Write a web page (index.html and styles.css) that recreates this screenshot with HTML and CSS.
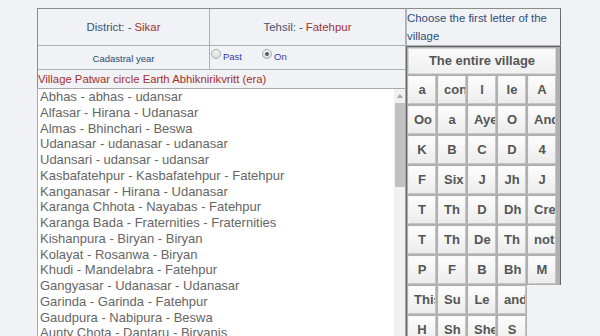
FILE: index.html
```html
<!DOCTYPE html>
<html>
<head>
<meta charset="utf-8">
<title>Village selection</title>
<link rel="stylesheet" href="styles.css">
</head>
<body>
<div class="frame">
  <div class="left">
    <div class="row top">
      <div class="cell">District: - <span class="val">Sikar</span></div>
      <div class="cell">Tehsil: - <span class="val">Fatehpur</span></div>
    </div>
    <div class="row year">
      <div class="cell ylabel">Cadastral year</div>
      <div class="cell radios">
        <span class="radio"></span><span class="rtext">Past</span>
        <span class="radio on"></span><span class="rtext">On</span>
      </div>
    </div>
    <div class="caption">Village Patwar circle Earth Abhiknirikvritt (era)</div>
    <div class="listbox">
      <div class="items">
        <div>Abhas - abhas - udansar</div>
        <div>Alfasar - Hirana - Udanasar</div>
        <div>Almas - Bhinchari - Beswa</div>
        <div>Udanasar - udanasar - udanasar</div>
        <div>Udansari - udansar - udansar</div>
        <div>Kasbafatehpur - Kasbafatehpur - Fatehpur</div>
        <div>Kanganasar - Hirana - Udanasar</div>
        <div>Karanga Chhota - Nayabas - Fatehpur</div>
        <div>Karanga Bada - Fraternities - Fraternities</div>
        <div>Kishanpura - Biryan - Biryan</div>
        <div>Kolayat - Rosanwa - Biryan</div>
        <div>Khudi - Mandelabra - Fatehpur</div>
        <div>Gangyasar - Udanasar - Udanasar</div>
        <div>Garinda - Garinda - Fatehpur</div>
        <div>Gaudpura - Nabipura - Beswa</div>
        <div>Aunty Chota - Dantaru - Biryanis</div>
        <div>Aunty Bada - Dantaru - Biryanis</div>
      </div>
      <div class="scrollbar"><div class="arrow"></div><div class="thumb"></div></div>
    </div>
  </div>
  <div class="right">
    <div class="choose">Choose the first letter of the village</div>
    <div class="keys five">
      <div class="all">The entire village</div>
      <div class="key">a</div><div class="key">conj</div><div class="key">l</div><div class="key">le</div><div class="key">A</div>
      <div class="key">Oo</div><div class="key">a</div><div class="key">Aye</div><div class="key">O</div><div class="key">And</div>
      <div class="key">K</div><div class="key">B</div><div class="key">C</div><div class="key">D</div><div class="key">4</div>
      <div class="key">F</div><div class="key">Six</div><div class="key">J</div><div class="key">Jh</div><div class="key">J</div>
      <div class="key">T</div><div class="key">Th</div><div class="key">D</div><div class="key">Dh</div><div class="key">Cree</div>
      <div class="key">T</div><div class="key">Th</div><div class="key">De</div><div class="key">Th</div><div class="key">not</div>
      <div class="key">P</div><div class="key">F</div><div class="key">B</div><div class="key">Bh</div><div class="key">M</div>
    </div>
    <div class="keys four">
      <div class="key">This</div><div class="key">Su</div><div class="key">Le</div><div class="key">and</div>
      <div class="key">H</div><div class="key">Sh</div><div class="key">Shee</div><div class="key">S</div>
    </div>
  </div>
</div>
</body>
</html>
```
FILE: styles.css
```css
* { box-sizing: border-box; }
html, body { margin: 0; padding: 0; }
body {
  background: #f0f2f5;
  font-family: "Liberation Sans", Arial, sans-serif;
  height: 336px;
  overflow: hidden;
}
.frame {
  display: flex;
  align-items: flex-start;
  margin: 8px 0 0 37px;
  width: 524px;
}
.left { width: 369px; flex: none; }
.row {
  display: grid;
  grid-template-columns: 172px 196px;
  border-left: 1px solid #8c8c8c;
}
.cell {
  border-right: 1px solid #b0b0b0;
  border-bottom: 1px solid #b0b0b0;
}
.top { border-top: 1px solid #8c8c8c; }
.top .cell {
  height: 37px;
  display: flex;
  align-items: center;
  justify-content: center;
  font-size: 11.4px;
  color: #3d5272;
}
.val { color: #a3312f; margin-left: 3px; }
.year .cell { height: 24px; }
.ylabel {
  display: flex;
  align-items: center;
  justify-content: center;
  font-size: 9.5px;
  color: #2d4a6e;
  padding-top: 1px;
}
.radios {
  display: flex;
  align-items: flex-start;
  padding: 3px 0 0 1px;
}
.radio {
  width: 10px;
  height: 10px;
  border-radius: 50%;
  border: 1px solid #a8a8a8;
  background: linear-gradient(#f4f4f4, #dcdcdc);
  display: flex;
  align-items: center;
  justify-content: center;
}
.radio.on { margin-left: 20px; }
.radio.on::after {
  content: "";
  width: 4px;
  height: 4px;
  border-radius: 50%;
  background: #5a5a5a;
}
.rtext {
  font-size: 9.5px;
  line-height: 12px;
  margin: 2px 0 0 2px;
  color: #3838a6;
}
.caption {
  height: 18px;
  border-left: 1px solid #8c8c8c;
  border-right: 1px solid #b0b0b0;
  font-size: 11.3px;
  line-height: 18px;
  color: #a3312f;
  white-space: nowrap;
}
.listbox {
  display: flex;
  height: 260px;
  border: 1px solid #a9a9a9;
  background: #fff;
}
.items {
  flex: 1;
  padding-left: 2px;
  font-size: 13px;
  line-height: 15.75px;
  color: #666;
  white-space: nowrap;
  overflow: hidden;
}
.scrollbar {
  width: 11px;
  flex: none;
  background: #f1f1f1;
  display: flex;
  flex-direction: column;
  align-items: center;
}
.arrow {
  margin-top: 5px;
  width: 0;
  height: 0;
  border-left: 3px solid transparent;
  border-right: 3px solid transparent;
  border-bottom: 4px solid #a3a3a3;
}
.thumb {
  margin-top: 5px;
  width: 10px;
  height: 84px;
  background: #c1c1c1;
}
.right { width: 155px; flex: none; }
.choose {
  height: 38px;
  border-top: 1px solid #8c8c8c;
  border-left: 1px solid #b8b8b8;
  border-right: 1px solid #6a6a6a;
  border-bottom: 1px solid #b0b0b0;
  font-size: 11.4px;
  line-height: 18px;
  color: #2f4e7c;
}
.keys {
  display: grid;
  gap: 2px;
  background: #b0b0b0;
  border-left: 1px solid #666;
}
.five {
  grid-template-columns: repeat(5, 28px);
  padding: 1px 3px 1px 1px;
  border-top: 1px solid #666;
  border-right: 1px solid #666;
}
.four {
  width: fit-content;
  grid-template-columns: repeat(4, 28px);
  padding: 1px 1px 1px 1px;
}
.all {
  grid-column: 1 / -1;
  height: 26px;
  background: linear-gradient(#fafafa, #f0f0f0);
  border: 1px solid #d8d8d8;
  text-align: center;
  font-weight: bold;
  font-size: 13px;
  line-height: 24px;
  color: #555;
}
.key {
  height: 28px;
  background: linear-gradient(#fdfdfd, #ececec);
  border: 1px solid #d4d4d4;
  border-color: #f8f8f8 #c4c4c4 #c4c4c4 #f0f0f0;
  padding: 0 5px;
  text-align: center;
  font-weight: bold;
  font-size: 13px;
  line-height: 26px;
  color: #555;
  white-space: nowrap;
  overflow: hidden;
}
```
